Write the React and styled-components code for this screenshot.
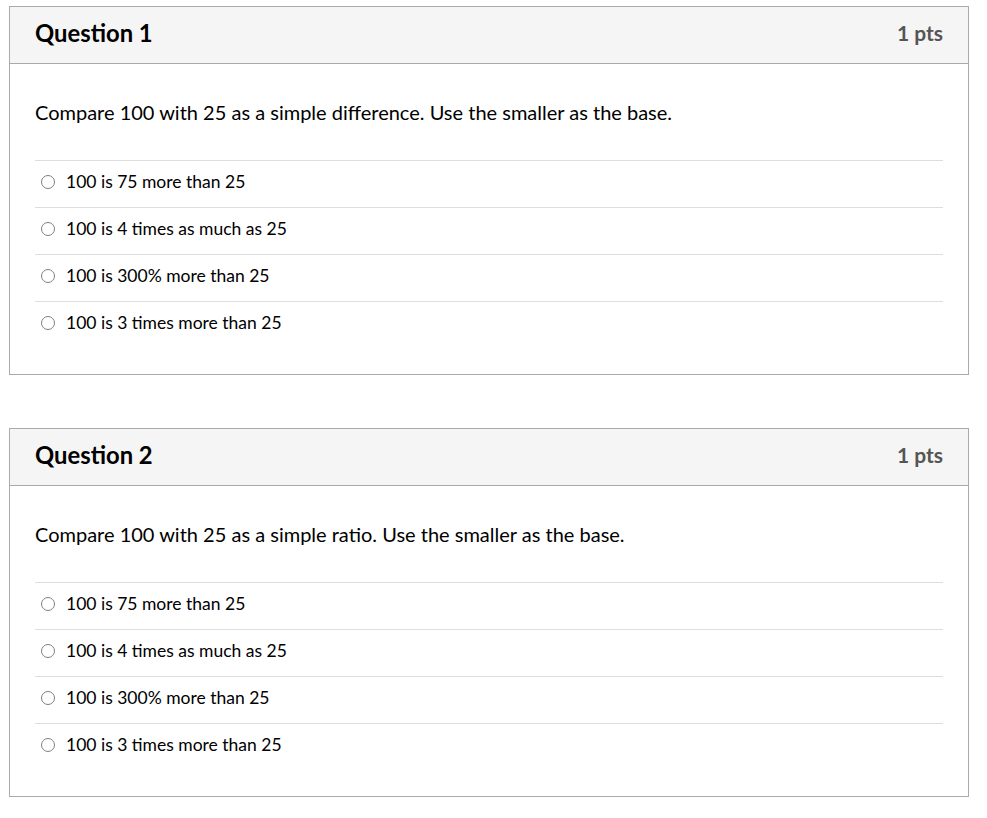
import React from "react";
import styled, { createGlobalStyle } from "styled-components";

const Global = createGlobalStyle`
  html, body { margin: 0; padding: 0; background: #fff; }
  body { font-family: Lato, "Open Sans", sans-serif; color: #000; }
`;

const Page = styled.div`
  padding: 6px 18px 20px 9px;
  display: flex;
  flex-direction: column;
  gap: 53px;
`;

const Card = styled.section`
  border: 1px solid #aaaaaa;
  background: #fff;
`;

const Header = styled.div`
  box-sizing: border-box;
  height: 57px;
  background: #f5f5f5;
  border-bottom: 1px solid #aaaaaa;
  display: flex;
  align-items: center;
  justify-content: space-between;
  padding: 0 25px 5px;
`;

const Title = styled.h2`
  margin: 0;
  font-size: 23.8px;
  font-weight: 700;
  color: #000;
`;

const Points = styled.span`
  font-size: 21px;
  font-weight: 700;
  color: #555;
`;

const Body = styled.div`
  padding: 35px 25px 26px;
`;

const Prompt = styled.p`
  margin: 0 0 35px;
  font-size: 20px;
  line-height: 26px;
  color: #000;
`;

const Answers = styled.div`
  display: flex;
  flex-direction: column;
`;

const Answer = styled.label`
  box-sizing: border-box;
  display: flex;
  align-items: center;
  height: 47px;
  border-top: 1px solid #ddd;
  padding: 0 0 5px 6px;
  font-size: 17.5px;
  color: #000;
  cursor: pointer;
`;

const Radio = styled.span`
  width: 12px;
  height: 12px;
  border: 1px solid #808080;
  border-radius: 50%;
  margin-right: 11px;
  margin-top: 1px;
  flex: none;
`;

const questions = [
  { n: 1, text: "Compare 100 with 25 as a simple difference. Use the smaller as the base." },
  { n: 2, text: "Compare 100 with 25 as a simple ratio. Use the smaller as the base." },
];

const options = [
  "100 is 75 more than 25",
  "100 is 4 times as much as 25",
  "100 is 300% more than 25",
  "100 is 3 times more than 25",
];

export default function App() {
  return (
    <>
      <Global />
      <Page>
        {questions.map((q) => (
          <Card key={q.n}>
            <Header>
              <Title>Question {q.n}</Title>
              <Points>1 pts</Points>
            </Header>
            <Body>
              <Prompt>{q.text}</Prompt>
              <Answers>
                {options.map((o) => (
                  <Answer key={o}>
                    <Radio />
                    {o}
                  </Answer>
                ))}
              </Answers>
            </Body>
          </Card>
        ))}
      </Page>
    </>
  );
}
